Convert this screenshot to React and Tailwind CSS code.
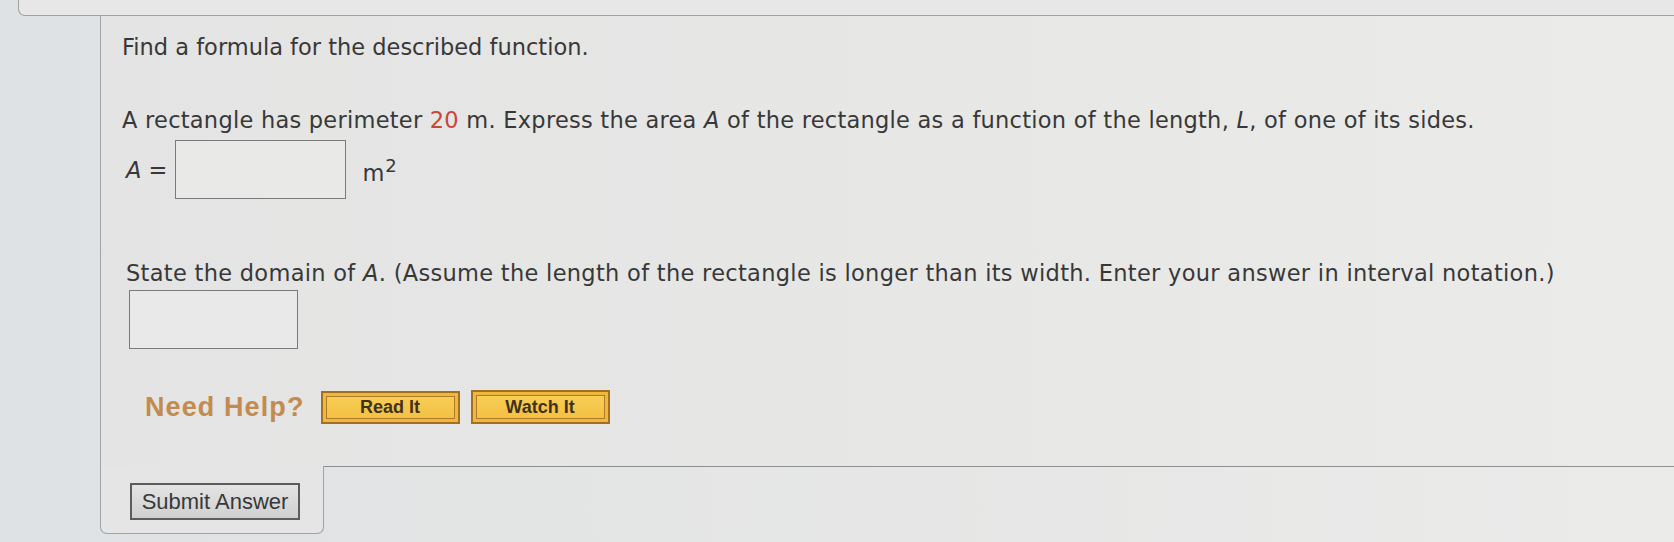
export default function App() {
  return (
    <div className="w-[1674px] h-[542px] overflow-hidden bg-linear-to-r from-[#dfe2e4] via-[#e5e6e5] to-[#ebecea] font-['DejaVu_Sans',Verdana,sans-serif] text-[#383838]">
      <div className="ml-[18px] h-[16px] border-l border-b border-[#a0a1a1] rounded-bl-[7px] bg-[#e6e7e6]" />
      <div className="ml-[100px] border-l border-[#a2a2a2] bg-linear-to-r from-[#e3e4e3] to-[#ebebe9] pl-[21px] pt-[17px] pb-[38px]">
        <p className="text-[22.5px] leading-[28px]">Find a formula for the described function.</p>
        <p className="mt-[45px] text-[22.5px] leading-[28px] tracking-[0.25px]">
          A rectangle has perimeter <span className="text-[#c5483c]">20</span> m. Express the area <i>A</i> of the rectangle as a function of the length, <i>L</i>, of one of its sides.
        </p>
        <div className="mt-[6px] ml-[4px] flex items-center text-[22.5px] leading-[28px]">
          <span><i>A</i> =</span>
          <div className="ml-[8px] w-[171px] h-[59px] border-[1.5px] border-[#7a7a7a] bg-[#e9e9e8]" />
          <span className="ml-[16px] relative top-[4px]">m<span className="text-[18px] relative top-[-9px] ml-[1px]">2</span></span>
        </div>
        <p className="mt-[60px] ml-[4px] text-[22.5px] leading-[28px] tracking-[0.3px]">
          State the domain of <i>A</i>. (Assume the length of the rectangle is longer than its width. Enter your answer in interval notation.)
        </p>
        <div className="mt-[3px] ml-[7px] w-[169px] h-[59px] border-[1.5px] border-[#7a7a7a] bg-[#e8e9e8]" />
        <div className="mt-[38px] ml-[23px] flex items-center">
          <span className="font-['Liberation_Sans',Arial,sans-serif] font-bold text-[27px] tracking-[1.1px] text-[#c48a4e]">Need Help?</span>
          <div className="ml-[16px] w-[139px] h-[33px] border-2 border-[#a3701f] bg-[#eeb83e] p-[3px]">
            <div className="h-full border-[1.5px] border-[#b07a2a] bg-linear-to-b from-[#f8ce55] to-[#f3c043] flex items-center justify-center font-['Liberation_Sans',Arial,sans-serif] font-bold text-[18px] text-[#3f331b]">Read It</div>
          </div>
          <div className="ml-[11px] w-[139px] h-[34px] border-2 border-[#a3701f] bg-[#eeb83e] p-[3px]">
            <div className="h-full border-[1.5px] border-[#b07a2a] bg-linear-to-b from-[#f8ce55] to-[#f3c043] flex items-center justify-center font-['Liberation_Sans',Arial,sans-serif] font-bold text-[18px] text-[#3f331b]">Watch It</div>
          </div>
        </div>
      </div>
      <div className="flex">
        <div className="ml-[100px] w-[224px] h-[68px] border-l border-b border-r border-[#a2a2a2] rounded-b-[7px] bg-[#e4e5e4] pt-[17px] pl-[29px]">
          <div className="w-[170px] h-[37px] border-2 border-[#5c5c5c] bg-linear-to-b from-[#e4e4e4] to-[#d0d0d0] flex items-center justify-center font-['Liberation_Sans',Arial,sans-serif] text-[22px] text-[#383838]">Submit Answer</div>
        </div>
        <div className="flex-1 border-t border-[#8f8f8f]" />
      </div>
    </div>
  );
}
